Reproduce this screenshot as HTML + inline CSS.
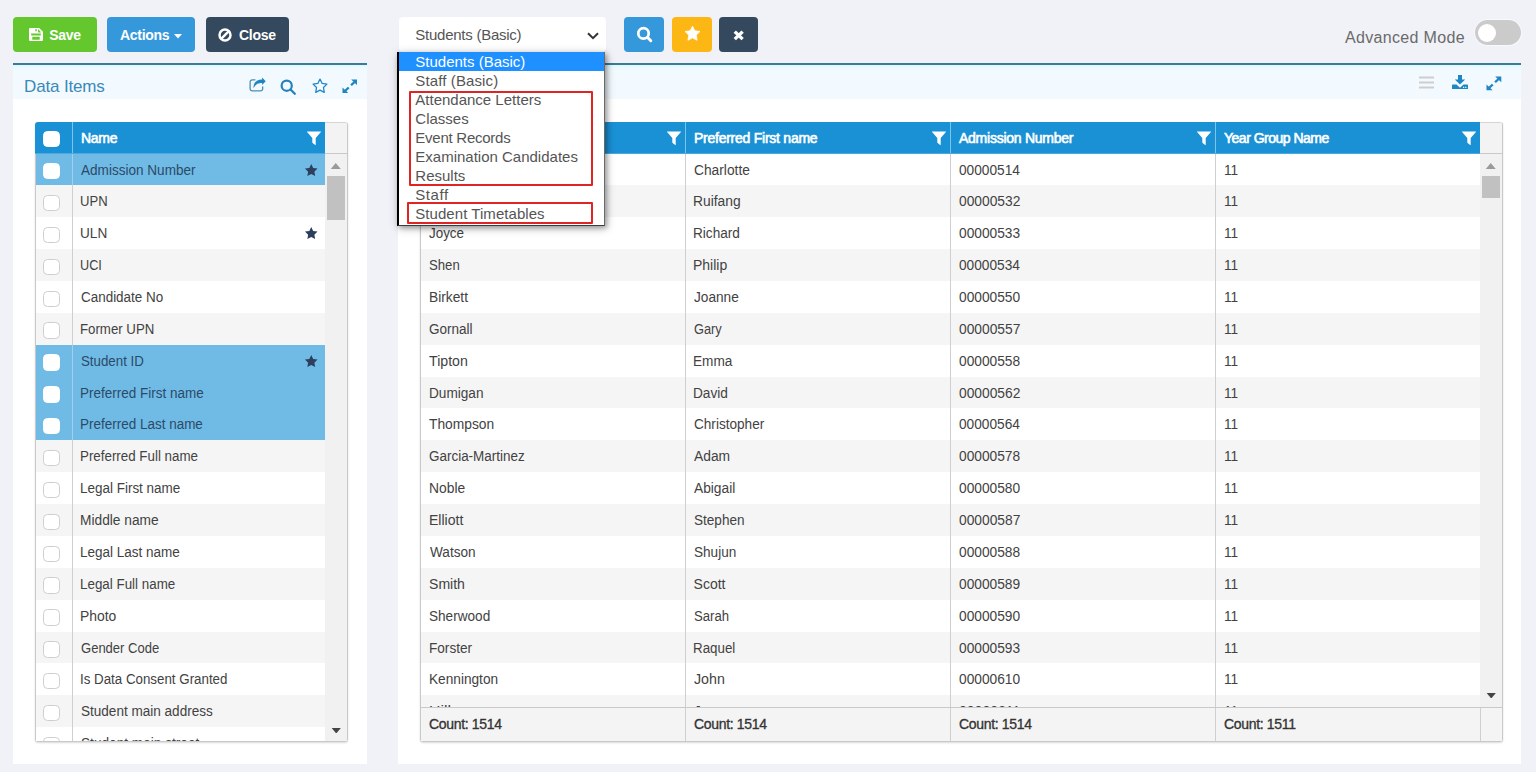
<!DOCTYPE html><html><head><meta charset="utf-8"><title>Report</title><style>
*{box-sizing:border-box;margin:0;padding:0}
html,body{width:1536px;height:772px;overflow:hidden}
body{background:#f1f2f7;font-family:"Liberation Sans",sans-serif;font-size:14px;color:#424242;position:relative}
.abs{position:absolute}
.btn{position:absolute;top:17px;height:35px;border-radius:4px;color:#fff;font-weight:bold;font-size:14px;letter-spacing:-.3px;line-height:35px;white-space:nowrap}
.btn span{position:absolute;top:.7px}
.btn svg{position:absolute}
.panel{position:absolute;top:63px;height:701px;background:#fff;border-top:2px solid #3a7c98}
.phead{position:absolute;left:0;right:0;top:0;height:34px;background:linear-gradient(#ddf8ff 0,#ecfaff 2.5px,#f2faff 7px,#f3faff)}
.ptitle{position:absolute;left:11px;top:1px;line-height:42px;font-size:17px;letter-spacing:-.15px;color:#3a89b8;white-space:nowrap}
.grid{position:absolute;top:121.5px;height:620px;border-radius:3px;overflow:hidden;background:#fff;box-shadow:0 1px 2px rgba(0,0,0,.15)}
.bl,.br,.bb{position:absolute;background:#c9c9c9}
.bl{left:0;top:32px;bottom:0;width:1px}
.br{right:0;top:0;bottom:0;width:1px}
.bb{left:0;right:0;bottom:0;height:1px}
.ghead{position:absolute;left:0;top:0;height:32px;border-bottom:1px solid rgba(255,255,255,.22);background:#1a90d5;color:#fff;font-weight:normal;-webkit-text-stroke:.6px #fff;font-size:14px;letter-spacing:-.25px;line-height:32px;white-space:nowrap}
.ghead .flt{position:absolute;top:9.5px}
.hspace{position:absolute;top:0;height:32px;width:23px;right:0;background:#f3f3f3;border-bottom:1px solid #c9c9c9;border-top:1px solid #d5d5d5;border-radius:0 3px 0 0}
.vbar{position:absolute;right:0;width:23px;background:#f1f1f1}
.thumb{position:absolute;left:2.2px;width:17.8px;background:#c1c1c1}
.rows{position:absolute;left:0;top:32px}
.row{position:absolute;left:0;height:31.87px;line-height:33.5px;white-space:nowrap;overflow:hidden}
.row.alt{background:#f5f5f5}
.row.sel{background:#70bbe6;color:#2b4a66}
.cell{position:absolute;top:0;bottom:0;border-left:1px solid #cfcfcf;padding-left:8px;overflow:hidden}
.row.sel .cell{border-left-color:#9fd0ee}
.f{position:relative;display:inline-block;transform-origin:0 50%}
.cb{position:absolute;left:8px;width:17px;height:16.400px;border-radius:4.5px;background:#fff;border:1px solid #cfcfcf}
.sel .cb,.ghead .cb{border-color:#fff}
.star{position:absolute}
.foot{position:absolute;left:0;height:34px;background:#f4f4f4;border-top:1px solid #c9c9c9;font-weight:normal;-webkit-text-stroke:.32px #333;font-size:14px;letter-spacing:-.33px;line-height:32px;color:#333;white-space:nowrap}
.dd{position:absolute;left:397px;top:52px;width:208.300px;height:173.500px;background:#fff;border:1px solid #3c3c3c;border-right-color:#6a6a6a;border-left:2px solid #000;border-top:none;box-shadow:2px 2px 5px rgba(0,0,0,.32),1px 2px 10px rgba(0,0,0,.2);font-size:15px;color:#555;overflow:hidden}
.dd div{position:absolute;left:0;right:0;height:19px;line-height:19px;padding-left:16.3px;white-space:nowrap}
.dd div.hl{background:#1e90ff;color:#fff}
.red{position:absolute;border:2.7px solid #de2524;border-radius:1px}
</style></head><body>
<div class="btn" style="left:13px;width:84px;background:#64c72d"><svg style="left:16px;top:11px" width="14" height="13" viewBox="0 0 14 13"><path fill="#fff" fill-rule="evenodd" d="M1 0H10.200L14 3.800V12a1 1 0 0 1-1 1H1a1 1 0 0 1-1-1V1a1 1 0 0 1 1-1zM2.200 5.500v2h9.600V5.500zM3.300 8.700v3.100h7.400V8.700zM6.300 1.300v1.900h1.500V1.300zM9.100 1.500v2.900h2.700V4.200L9.700 1.500z"/></svg><span style="left:36.3px">Save</span></div>
<div class="btn" style="left:107px;width:88px;background:#3498db"><span style="left:13px">Actions</span><svg style="left:67px;top:16.5px" width="8" height="5" viewBox="0 0 8 5"><path fill="#fff" d="M0 0h8L4 4.6z"/></svg></div>
<div class="btn" style="left:206px;width:83px;background:#34495e"><svg style="left:12px;top:11px" width="14" height="14" viewBox="0 0 14 14"><circle cx="7" cy="7" r="5.5" fill="none" stroke="#fff" stroke-width="2.5"/><path d="M3.2 10.8L10.8 3.2" stroke="#fff" stroke-width="2.4"/></svg><span style="left:33px">Close</span></div>
<div class="abs" style="left:399px;top:17px;width:207px;height:35px;background:#fff;border-radius:4px;box-shadow:0 1px 1px rgba(0,0,0,.05)"><span class="abs" style="left:16.3px;top:0;line-height:35px;font-size:15px;letter-spacing:-.25px;color:#555;white-space:nowrap">Students (Basic)</span><svg class="abs" style="left:188px;top:15px" width="12" height="8" viewBox="0 0 12 8"><path d="M1 1.2l5 5 5-5" fill="none" stroke="#333" stroke-width="2"/></svg></div>
<div class="btn" style="left:624px;width:40px;background:#3498db"><svg style="left:0;top:0" width="40" height="35" viewBox="0 0 40 35"><circle cx="19.5" cy="16.4" r="5.2" fill="none" stroke="#fff" stroke-width="2.7"/><path d="M23.4 20.300l3.400 3.400" stroke="#fff" stroke-width="3" stroke-linecap="round"/></svg></div>
<div class="btn" style="left:672px;width:40px;background:#fdb714"><svg style="left:11.9px;top:8.4px" width="17" height="17" viewBox="0 0 24 24"><path fill="#fff" stroke="#fff" stroke-width="1.2" stroke-linejoin="round" d="M12 1.6l3.2 6.6 7.2 1-5.2 5.1 1.25 7.2L12 18.1l-6.45 3.4 1.25-7.2L1.6 9.2l7.2-1z"/></svg></div>
<div class="btn" style="left:719px;width:39px;background:#34495e"><svg style="left:14.2px;top:12.8px" width="11.400" height="10.800" viewBox="0 0 11 11" preserveAspectRatio="none"><path d="M1.7 1.7l7.600 7.600M9.300 1.700L1.700 9.300" stroke="#fff" stroke-width="3.2" stroke-linejoin="round"/></svg></div>
<div class="abs" style="left:1345px;top:25.7px;font-size:16px;letter-spacing:.33px;line-height:24px;color:#6a6a6a;white-space:nowrap">Advanced Mode</div>
<div class="abs" style="left:1475px;top:20px;width:46px;height:25px;border-radius:13px;background:#cbcbcb;box-shadow:0 0 0 1px rgba(255,255,255,.5)"><div class="abs" style="left:2.5px;top:3.5px;width:18px;height:18px;border-radius:9px;background:#fff"></div></div>
<div class="panel" style="left:13px;width:354px"><div class="phead"><div class="ptitle">Data Items</div>
<svg class="abs" style="left:235.500px;top:12.200px" width="18" height="15" viewBox="0 0 18 15"><path d="M6 2.850H3.200a2.100 2.100 0 0 0-2.100 2.100V11.700a2.100 2.100 0 0 0 2.100 2.100H11.600a2.100 2.100 0 0 0 2.100-2.100V9.800" fill="none" stroke="#4a8fb6" stroke-width="1.300" stroke-linecap="round"/><path fill="#1f86c4" d="M13.100 0.500L16.700 4.300 13.100 8V6C9.500 6 6.500 6.800 4.600 11.300 4 6 7.500 2.600 13.100 2.600z"/></svg>
<svg class="abs" style="left:267px;top:13.900px" width="17" height="17" viewBox="0 0 17 17"><circle cx="6.700" cy="6.700" r="5.100" fill="none" stroke="#2381bb" stroke-width="2.200"/><path d="M10.500 10.500l4.300 4.300" stroke="#2381bb" stroke-width="2.300" stroke-linecap="round"/></svg>
<svg class="abs" style="left:298.500px;top:13px" width="16" height="16" viewBox="0 0 24 24"><path fill="none" stroke="#1f86c4" stroke-width="1.9" stroke-linejoin="round" d="M12 1.6l3.2 6.6 7.2 1-5.2 5.1 1.25 7.2L12 18.1l-6.45 3.4 1.25-7.2L1.6 9.2l7.2-1z"/></svg>
<svg class="abs" style="left:328.500px;top:13.600px" width="15.800" height="14.800" viewBox="0 0 16 16" preserveAspectRatio="none"><path d="M9.300 0.500h6.200v6.200zM6.700 15.500H0.500V9.300z" fill="#1f86c4"/><path d="M12.700 3.300L9.200 6.800M3.300 12.700l3.500-3.500" stroke="#1f86c4" stroke-width="2.400"/></svg>
</div></div>
<div class="grid" style="left:35px;width:313px">
<div class="ghead" style="width:290px"><div class="cb" style="top:9.5px;border-color:#fff"></div><div class="cell" style="left:37px;right:0;border-left-color:#7cc4ec;letter-spacing:-.3px">Name</div><svg class="flt" style="left:272.200px" viewBox="0 0 14 14" width="14" height="14.600" preserveAspectRatio="none"><path fill="#fff" d="M0.3 0.4h13.4c0.3 0 0.4 0.3 0.2 0.5L8.7 6.6v6.6c0 0.3-0.3 0.5-0.5 0.3L5.6 11.4c-0.2-0.1-0.3-0.3-0.3-0.5V6.6L0.1 0.9C-0.1 0.7 0 0.4 0.3 0.4z"/></svg></div>
<div class="hspace"></div>
<div class="rows">
<div class="row sel" style="top:0.00px;width:290px"><div class="cb" style="top:9.600px"></div><div class="cell" style="left:37px;right:0"><span class="f" style="left:0.30px;transform:scaleX(0.9686)">Admission Number</span></div><svg class="star" style="left:268.800px;top:9px" width="14.500" height="14.500" viewBox="0 0 24 24"><path fill="#2c3f5c" d="M12 1.6l3.2 6.6 7.2 1-5.2 5.1 1.25 7.2L12 18.1l-6.45 3.4 1.25-7.2L1.6 9.2l7.2-1z"/></svg></div>
<div class="row alt" style="top:31.87px;width:290px"><div class="cb" style="top:9.600px"></div><div class="cell" style="left:37px;right:0"><span class="f" style="left:-0.63px;transform:scaleX(0.9345)">UPN</span></div></div>
<div class="row" style="top:63.74px;width:290px"><div class="cb" style="top:9.600px"></div><div class="cell" style="left:37px;right:0"><span class="f" style="left:-0.67px;transform:scaleX(0.9709)">ULN</span></div><svg class="star" style="left:268.800px;top:9px" width="14.500" height="14.500" viewBox="0 0 24 24"><path fill="#2c3f5c" d="M12 1.6l3.2 6.6 7.2 1-5.2 5.1 1.25 7.2L12 18.1l-6.45 3.4 1.25-7.2L1.6 9.2l7.2-1z"/></svg></div>
<div class="row alt" style="top:95.61px;width:290px"><div class="cb" style="top:9.600px"></div><div class="cell" style="left:37px;right:0"><span class="f" style="left:-0.60px;transform:scaleX(0.9045)">UCI</span></div></div>
<div class="row" style="top:127.48px;width:290px"><div class="cb" style="top:9.600px"></div><div class="cell" style="left:37px;right:0"><span class="f" style="left:-0.42px;transform:scaleX(0.9602)">Candidate No</span></div></div>
<div class="row alt" style="top:159.35px;width:290px"><div class="cb" style="top:9.600px"></div><div class="cell" style="left:37px;right:0"><span class="f" style="left:-0.65px;transform:scaleX(0.9464)">Former UPN</span></div></div>
<div class="row sel" style="top:191.22px;width:290px"><div class="cb" style="top:9.600px"></div><div class="cell" style="left:37px;right:0"><span class="f" style="left:-0.41px;transform:scaleX(0.9498)">Student ID</span></div><svg class="star" style="left:268.800px;top:9px" width="14.500" height="14.500" viewBox="0 0 24 24"><path fill="#2c3f5c" d="M12 1.6l3.2 6.6 7.2 1-5.2 5.1 1.25 7.2L12 18.1l-6.45 3.4 1.25-7.2L1.6 9.2l7.2-1z"/></svg></div>
<div class="row sel" style="top:223.09px;width:290px"><div class="cb" style="top:9.600px"></div><div class="cell" style="left:37px;right:0"><span class="f" style="left:-0.66px;transform:scaleX(0.9633)">Preferred First name</span></div></div>
<div class="row sel" style="top:254.96px;width:290px"><div class="cb" style="top:9.600px"></div><div class="cell" style="left:37px;right:0"><span class="f" style="left:-0.66px;transform:scaleX(0.9627)">Preferred Last name</span></div></div>
<div class="row alt" style="top:286.83px;width:290px"><div class="cb" style="top:9.600px"></div><div class="cell" style="left:37px;right:0"><span class="f" style="left:-0.65px;transform:scaleX(0.9538)">Preferred Full name</span></div></div>
<div class="row" style="top:318.70px;width:290px"><div class="cb" style="top:9.600px"></div><div class="cell" style="left:37px;right:0"><span class="f" style="left:-0.66px;transform:scaleX(0.9616)">Legal First name</span></div></div>
<div class="row alt" style="top:350.57px;width:290px"><div class="cb" style="top:9.600px"></div><div class="cell" style="left:37px;right:0"><span class="f" style="left:-0.68px;transform:scaleX(0.9809)">Middle name</span></div></div>
<div class="row" style="top:382.44px;width:290px"><div class="cb" style="top:9.600px"></div><div class="cell" style="left:37px;right:0"><span class="f" style="left:-0.66px;transform:scaleX(0.9647)">Legal Last name</span></div></div>
<div class="row alt" style="top:414.31px;width:290px"><div class="cb" style="top:9.600px"></div><div class="cell" style="left:37px;right:0"><span class="f" style="left:-0.66px;transform:scaleX(0.9561)">Legal Full name</span></div></div>
<div class="row" style="top:446.18px;width:290px"><div class="cb" style="top:9.600px"></div><div class="cell" style="left:37px;right:0"><span class="f" style="left:-0.69px;transform:scaleX(0.9914)">Photo</span></div></div>
<div class="row alt" style="top:478.05px;width:290px"><div class="cb" style="top:9.600px"></div><div class="cell" style="left:37px;right:0"><span class="f" style="left:-0.40px;transform:scaleX(0.9305)">Gender Code</span></div></div>
<div class="row" style="top:509.92px;width:290px"><div class="cb" style="top:9.600px"></div><div class="cell" style="left:37px;right:0"><span class="f" style="left:-0.89px;transform:scaleX(0.9519)">Is Data Consent Granted</span></div></div>
<div class="row alt" style="top:541.79px;width:290px"><div class="cb" style="top:9.600px"></div><div class="cell" style="left:37px;right:0"><span class="f" style="left:-0.43px;transform:scaleX(0.9674)">Student main address</span></div></div>
<div class="row" style="top:573.66px;width:290px"><div class="cb" style="top:9.600px"></div><div class="cell" style="left:37px;right:0"><span class="f" style="left:-0.43px;transform:scaleX(0.9743)">Student main street</span></div></div>
</div>
<div class="vbar" style="top:32px;bottom:0"><svg class="abs" style="left:5.400px;top:9px" width="11.500" height="6" viewBox="0 0 10 6"><path fill="#9a9a9a" d="M5 0l5 6H0z"/></svg><div class="thumb" style="top:22.500px;height:43.600px"></div><svg class="abs" style="left:6px;top:574px" width="10.500" height="5.500" viewBox="0 0 10 6"><path fill="#444" d="M0 0h10L5 6z"/></svg></div>
<div class="bl"></div><div class="br"></div><div class="bb"></div>
</div>
<div class="panel" style="left:397.500px;width:1123.500px"><div class="phead">
<svg class="abs" style="left:1021.500px;top:11.300px" width="15" height="13" viewBox="0 0 15 13"><path d="M0 1.500h15M0 6.500h15M0 11.500h15" stroke="#cdcdcd" stroke-width="2"/></svg>
<svg class="abs" style="left:1054.500px;top:9.500px" width="16" height="14.400" viewBox="0 0 16 15" preserveAspectRatio="none"><path fill="#1f86c4" d="M6 0h4v4.800h3.200L8 10 2.800 4.800H6z"/><path fill="#1f86c4" fill-rule="evenodd" d="M0.800 9.800h3.700L8 13.200l3.500-3.400h3.700a0.800 0.800 0 0 1 0.800 0.800v3.600a0.800 0.800 0 0 1-0.800 0.800H0.800a0.800 0.800 0 0 1-0.800-0.800v-3.600a0.800 0.800 0 0 1 0.800-0.800zM11 12.300h1.200v1.200H11zM13.200 12.300h1.200v1.200h-1.200z"/></svg>
<svg class="abs" style="left:1088.400px;top:10.800px" width="15.800" height="14.800" viewBox="0 0 16 16" preserveAspectRatio="none"><path d="M9.300 0.500h6.200v6.200zM6.700 15.500H0.500V9.300z" fill="#1f86c4"/><path d="M12.700 3.300L9.200 6.800M3.300 12.700l3.500-3.500" stroke="#1f86c4" stroke-width="2.400"/></svg>
</div></div>
<div class="grid" style="left:420px;width:1083px">
<div class="ghead" style="width:1060px"><div class="cell" style="left:0px;width:265px;border-left-color:#1a90d5">Preferred Last name</div><svg class="flt" style="left:247px" viewBox="0 0 14 14" width="14" height="14.600" preserveAspectRatio="none"><path fill="#fff" d="M0.3 0.4h13.4c0.3 0 0.4 0.3 0.2 0.5L8.7 6.6v6.6c0 0.3-0.3 0.5-0.5 0.3L5.6 11.4c-0.2-0.1-0.3-0.3-0.3-0.5V6.6L0.1 0.9C-0.1 0.7 0 0.4 0.3 0.4z"/></svg><div class="cell" style="left:265px;width:265px;border-left-color:#7cc4ec">Preferred First name</div><svg class="flt" style="left:512px" viewBox="0 0 14 14" width="14" height="14.600" preserveAspectRatio="none"><path fill="#fff" d="M0.3 0.4h13.4c0.3 0 0.4 0.3 0.2 0.5L8.7 6.6v6.6c0 0.3-0.3 0.5-0.5 0.3L5.6 11.4c-0.2-0.1-0.3-0.3-0.3-0.5V6.6L0.1 0.9C-0.1 0.7 0 0.4 0.3 0.4z"/></svg><div class="cell" style="left:530px;width:265px;border-left-color:#7cc4ec">Admission Number</div><svg class="flt" style="left:777px" viewBox="0 0 14 14" width="14" height="14.600" preserveAspectRatio="none"><path fill="#fff" d="M0.3 0.4h13.4c0.3 0 0.4 0.3 0.2 0.5L8.7 6.6v6.6c0 0.3-0.3 0.5-0.5 0.3L5.6 11.4c-0.2-0.1-0.3-0.3-0.3-0.5V6.6L0.1 0.9C-0.1 0.7 0 0.4 0.3 0.4z"/></svg><div class="cell" style="left:795px;width:265px;border-left-color:#7cc4ec;letter-spacing:-.5px">Year Group Name</div><svg class="flt" style="left:1042px" viewBox="0 0 14 14" width="14" height="14.600" preserveAspectRatio="none"><path fill="#fff" d="M0.3 0.4h13.4c0.3 0 0.4 0.3 0.2 0.5L8.7 6.6v6.6c0 0.3-0.3 0.5-0.5 0.3L5.6 11.4c-0.2-0.1-0.3-0.3-0.3-0.5V6.6L0.1 0.9C-0.1 0.7 0 0.4 0.3 0.4z"/></svg></div>
<div class="hspace"></div>
<div class="rows" style="height:553.5px;width:1083px;overflow:hidden">
<div class="row" style="top:0.00px;width:1060px"><div class="cell" style="left:0px;width:265px;border-left-color:transparent"><span class="f" style="left:-0.28px;transform:scaleX(0.9750)">Li</span></div><div class="cell" style="left:265px;width:265px"><span class="f" style="left:-0.44px;transform:scaleX(0.9838)">Charlotte</span></div><div class="cell" style="left:530px;width:265px"><span class="f" style="left:0.01px;transform:scaleX(0.9772)">00000514</span></div><div class="cell" style="left:795px;width:265px"><span class="f" style="left:-0.48px;transform:scaleX(0.9769)">11</span></div></div>
<div class="row alt" style="top:31.87px;width:1060px"><div class="cell" style="left:0px;width:265px;border-left-color:transparent"><span class="f" style="left:0.70px;transform:scaleX(0.9750)">Wu</span></div><div class="cell" style="left:265px;width:265px"><span class="f" style="left:-0.69px;transform:scaleX(0.9871)">Ruifang</span></div><div class="cell" style="left:530px;width:265px"><span class="f" style="left:0.01px;transform:scaleX(0.9852)">00000532</span></div><div class="cell" style="left:795px;width:265px"><span class="f" style="left:-0.48px;transform:scaleX(0.9769)">11</span></div></div>
<div class="row" style="top:63.74px;width:1060px"><div class="cell" style="left:0px;width:265px;border-left-color:transparent"><span class="f" style="left:0.46px;transform:scaleX(0.9566)">Joyce</span></div><div class="cell" style="left:265px;width:265px"><span class="f" style="left:-0.67px;transform:scaleX(0.9730)">Richard</span></div><div class="cell" style="left:530px;width:265px"><span class="f" style="left:0.01px;transform:scaleX(0.9812)">00000533</span></div><div class="cell" style="left:795px;width:265px"><span class="f" style="left:-0.48px;transform:scaleX(0.9769)">11</span></div></div>
<div class="row alt" style="top:95.61px;width:1060px"><div class="cell" style="left:0px;width:265px;border-left-color:transparent"><span class="f" style="left:-0.00px;transform:scaleX(0.9387)">Shen</span></div><div class="cell" style="left:265px;width:265px"><span class="f" style="left:-0.70px;transform:scaleX(0.9985)">Philip</span></div><div class="cell" style="left:530px;width:265px"><span class="f" style="left:0.01px;transform:scaleX(0.9772)">00000534</span></div><div class="cell" style="left:795px;width:265px"><span class="f" style="left:-0.48px;transform:scaleX(0.9769)">11</span></div></div>
<div class="row" style="top:127.48px;width:1060px"><div class="cell" style="left:0px;width:265px;border-left-color:transparent"><span class="f" style="left:-0.28px;transform:scaleX(0.9832)">Birkett</span></div><div class="cell" style="left:265px;width:265px"><span class="f" style="left:0.06px;transform:scaleX(0.9756)">Joanne</span></div><div class="cell" style="left:530px;width:265px"><span class="f" style="left:0.01px;transform:scaleX(0.9812)">00000550</span></div><div class="cell" style="left:795px;width:265px"><span class="f" style="left:-0.48px;transform:scaleX(0.9769)">11</span></div></div>
<div class="row alt" style="top:159.35px;width:1060px"><div class="cell" style="left:0px;width:265px;border-left-color:transparent"><span class="f" style="left:-0.02px;transform:scaleX(0.9655)">Gornall</span></div><div class="cell" style="left:265px;width:265px"><span class="f" style="left:-0.39px;transform:scaleX(0.9153)">Gary</span></div><div class="cell" style="left:530px;width:265px"><span class="f" style="left:0.01px;transform:scaleX(0.9852)">00000557</span></div><div class="cell" style="left:795px;width:265px"><span class="f" style="left:-0.48px;transform:scaleX(0.9769)">11</span></div></div>
<div class="row" style="top:191.22px;width:1060px"><div class="cell" style="left:0px;width:265px;border-left-color:transparent"><span class="f" style="left:0.45px;transform:scaleX(1.0121)">Tipton</span></div><div class="cell" style="left:265px;width:265px"><span class="f" style="left:-0.67px;transform:scaleX(0.9722)">Emma</span></div><div class="cell" style="left:530px;width:265px"><span class="f" style="left:0.01px;transform:scaleX(0.9812)">00000558</span></div><div class="cell" style="left:795px;width:265px"><span class="f" style="left:-0.48px;transform:scaleX(0.9769)">11</span></div></div>
<div class="row alt" style="top:223.09px;width:1060px"><div class="cell" style="left:0px;width:265px;border-left-color:transparent"><span class="f" style="left:-0.27px;transform:scaleX(0.9733)">Dumigan</span></div><div class="cell" style="left:265px;width:265px"><span class="f" style="left:-0.68px;transform:scaleX(0.9765)">David</span></div><div class="cell" style="left:530px;width:265px"><span class="f" style="left:0.01px;transform:scaleX(0.9852)">00000562</span></div><div class="cell" style="left:795px;width:265px"><span class="f" style="left:-0.48px;transform:scaleX(0.9769)">11</span></div></div>
<div class="row" style="top:254.96px;width:1060px"><div class="cell" style="left:0px;width:265px;border-left-color:transparent"><span class="f" style="left:0.45px;transform:scaleX(0.9862)">Thompson</span></div><div class="cell" style="left:265px;width:265px"><span class="f" style="left:-0.43px;transform:scaleX(0.9706)">Christopher</span></div><div class="cell" style="left:530px;width:265px"><span class="f" style="left:0.01px;transform:scaleX(0.9772)">00000564</span></div><div class="cell" style="left:795px;width:265px"><span class="f" style="left:-0.48px;transform:scaleX(0.9769)">11</span></div></div>
<div class="row alt" style="top:286.83px;width:1060px"><div class="cell" style="left:0px;width:265px;border-left-color:transparent"><span class="f" style="left:-0.02px;transform:scaleX(0.9608)">Garcia-Martinez</span></div><div class="cell" style="left:265px;width:265px"><span class="f" style="left:0.30px;transform:scaleX(0.9874)">Adam</span></div><div class="cell" style="left:530px;width:265px"><span class="f" style="left:0.01px;transform:scaleX(0.9812)">00000578</span></div><div class="cell" style="left:795px;width:265px"><span class="f" style="left:-0.48px;transform:scaleX(0.9769)">11</span></div></div>
<div class="row" style="top:318.70px;width:1060px"><div class="cell" style="left:0px;width:265px;border-left-color:transparent"><span class="f" style="left:-0.29px;transform:scaleX(0.9886)">Noble</span></div><div class="cell" style="left:265px;width:265px"><span class="f" style="left:0.30px;transform:scaleX(0.9818)">Abigail</span></div><div class="cell" style="left:530px;width:265px"><span class="f" style="left:0.01px;transform:scaleX(0.9812)">00000580</span></div><div class="cell" style="left:795px;width:265px"><span class="f" style="left:-0.48px;transform:scaleX(0.9769)">11</span></div></div>
<div class="row alt" style="top:350.57px;width:1060px"><div class="cell" style="left:0px;width:265px;border-left-color:transparent"><span class="f" style="left:-0.30px;transform:scaleX(1.0015)">Elliott</span></div><div class="cell" style="left:265px;width:265px"><span class="f" style="left:-0.43px;transform:scaleX(0.9683)">Stephen</span></div><div class="cell" style="left:530px;width:265px"><span class="f" style="left:0.01px;transform:scaleX(0.9852)">00000587</span></div><div class="cell" style="left:795px;width:265px"><span class="f" style="left:-0.48px;transform:scaleX(0.9769)">11</span></div></div>
<div class="row" style="top:382.44px;width:1060px"><div class="cell" style="left:0px;width:265px;border-left-color:transparent"><span class="f" style="left:0.70px;transform:scaleX(0.9717)">Watson</span></div><div class="cell" style="left:265px;width:265px"><span class="f" style="left:-0.43px;transform:scaleX(0.9690)">Shujun</span></div><div class="cell" style="left:530px;width:265px"><span class="f" style="left:0.01px;transform:scaleX(0.9812)">00000588</span></div><div class="cell" style="left:795px;width:265px"><span class="f" style="left:-0.48px;transform:scaleX(0.9769)">11</span></div></div>
<div class="row alt" style="top:414.31px;width:1060px"><div class="cell" style="left:0px;width:265px;border-left-color:transparent"><span class="f" style="left:-0.05px;transform:scaleX(1.0044)">Smith</span></div><div class="cell" style="left:265px;width:265px"><span class="f" style="left:-0.45px;transform:scaleX(1.0000)">Scott</span></div><div class="cell" style="left:530px;width:265px"><span class="f" style="left:0.01px;transform:scaleX(0.9812)">00000589</span></div><div class="cell" style="left:795px;width:265px"><span class="f" style="left:-0.48px;transform:scaleX(0.9769)">11</span></div></div>
<div class="row" style="top:446.18px;width:1060px"><div class="cell" style="left:0px;width:265px;border-left-color:transparent"><span class="f" style="left:-0.03px;transform:scaleX(0.9707)">Sherwood</span></div><div class="cell" style="left:265px;width:265px"><span class="f" style="left:-0.40px;transform:scaleX(0.9371)">Sarah</span></div><div class="cell" style="left:530px;width:265px"><span class="f" style="left:0.01px;transform:scaleX(0.9812)">00000590</span></div><div class="cell" style="left:795px;width:265px"><span class="f" style="left:-0.48px;transform:scaleX(0.9769)">11</span></div></div>
<div class="row alt" style="top:478.05px;width:1060px"><div class="cell" style="left:0px;width:265px;border-left-color:transparent"><span class="f" style="left:-0.27px;transform:scaleX(0.9711)">Forster</span></div><div class="cell" style="left:265px;width:265px"><span class="f" style="left:-0.65px;transform:scaleX(0.9529)">Raquel</span></div><div class="cell" style="left:530px;width:265px"><span class="f" style="left:0.01px;transform:scaleX(0.9812)">00000593</span></div><div class="cell" style="left:795px;width:265px"><span class="f" style="left:-0.48px;transform:scaleX(0.9769)">11</span></div></div>
<div class="row" style="top:509.92px;width:1060px"><div class="cell" style="left:0px;width:265px;border-left-color:transparent"><span class="f" style="left:-0.28px;transform:scaleX(0.9754)">Kennington</span></div><div class="cell" style="left:265px;width:265px"><span class="f" style="left:0.05px;transform:scaleX(1.0154)">John</span></div><div class="cell" style="left:530px;width:265px"><span class="f" style="left:0.01px;transform:scaleX(0.9812)">00000610</span></div><div class="cell" style="left:795px;width:265px"><span class="f" style="left:-0.48px;transform:scaleX(0.9769)">11</span></div></div>
<div class="row alt" style="top:541.79px;width:1060px"><div class="cell" style="left:0px;width:265px;border-left-color:transparent"><span class="f" style="left:-0.43px;transform:scaleX(1.1257)">Hill</span></div><div class="cell" style="left:265px;width:265px"><span class="f" style="left:0.06px;transform:scaleX(0.9750)">James</span></div><div class="cell" style="left:530px;width:265px"><span class="f" style="left:-0.00px;transform:scaleX(1.0017)">00000611</span></div><div class="cell" style="left:795px;width:265px"><span class="f" style="left:-0.48px;transform:scaleX(0.9769)">11</span></div></div>
</div>
<div class="foot" style="top:585.5px;width:1083px"><div class="cell" style="left:0px;width:265px;border-left-color:transparent">Count: 1514</div><div class="cell" style="left:265px;width:265px">Count: 1514</div><div class="cell" style="left:530px;width:265px">Count: 1514</div><div class="cell" style="left:795px;width:265px">Count: 1511</div><div class="cell" style="left:1060px;width:23px"></div></div>
<div class="vbar" style="top:32px;height:553.5px"><svg class="abs" style="left:5.400px;top:9px" width="11.500" height="6" viewBox="0 0 10 6"><path fill="#9a9a9a" d="M5 0l5 6H0z"/></svg><div class="thumb" style="top:22.500px;height:21.800px"></div><svg class="abs" style="left:6px;top:539.200px" width="10.500" height="5.500" viewBox="0 0 10 6"><path fill="#444" d="M0 0h10L5 6z"/></svg></div>
<div class="bl"></div><div class="br"></div><div class="bb"></div>
</div>
<div class="dd"><div class="hl" style="top:0px">Students (Basic)</div><div style="top:19px;letter-spacing:0.12px">Staff (Basic)</div><div style="top:38px">Attendance Letters</div><div style="top:57px">Classes</div><div style="top:76px;letter-spacing:-0.25px">Event Records</div><div style="top:95px">Examination Candidates</div><div style="top:114px">Results</div><div style="top:133px;letter-spacing:0.55px">Staff</div><div style="top:152px;letter-spacing:0.05px">Student Timetables</div></div>
<div class="red" style="left:409px;top:90.500px;width:183.600px;height:95.200px"></div>
<div class="red" style="left:407.400px;top:201.500px;width:185.200px;height:22.400px"></div>
</body></html>
